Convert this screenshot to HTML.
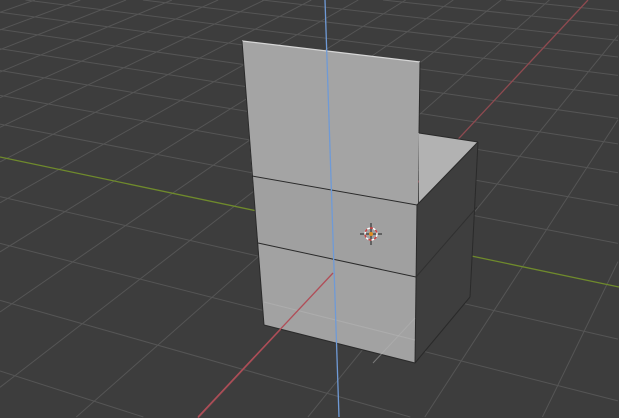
<!DOCTYPE html>
<html><head><meta charset="utf-8"><style>
html,body{margin:0;padding:0;background:#3d3d3d;width:619px;height:418px;overflow:hidden}
svg{display:block;overflow:hidden}
</style></head><body>
<svg id="s" width="619" height="418" viewBox="0 0 619 418" xmlns="http://www.w3.org/2000/svg">
<rect width="619" height="418" fill="#3d3d3d"/>
<g id="grid" stroke="#555555" stroke-width="1" fill="none"></g>
<line x1="0" y1="157" x2="619" y2="287" stroke="#6f8a2c" stroke-width="1.3"/>
<line x1="198" y1="418" x2="588" y2="0" stroke="#8e4a50" stroke-width="1.3"/>
<polygon points="242,41 420,62 418,205 252,176" fill="#a4a4a4"/>
<line x1="242" y1="41" x2="420" y2="62" stroke="#d6d6d6" stroke-width="1.2"/>
<polygon points="419,133 478,142 417,205 419,205" fill="#b2b2b2"/>
<polygon points="417,205 478,142 470,297 415,363" fill="#3e3e3e"/>
<polygon points="252,176 417,205 416,277 258,243" fill="#a0a0a0"/>
<polygon points="258,243 416,277 415,363 264,325" fill="#a2a2a2"/>
<g stroke="#2a2a2a" stroke-width="1" fill="none">
<line x1="242" y1="41" x2="264" y2="325"/>
<line x1="420" y1="62" x2="419" y2="133"/>
<line x1="252" y1="176" x2="417" y2="205"/>
<line x1="258" y1="243" x2="416" y2="277"/>
<line x1="264" y1="325" x2="415" y2="363"/>
<line x1="417" y1="205" x2="415" y2="363"/>
<line x1="419" y1="133" x2="478" y2="142"/>
<line x1="478" y1="142" x2="417" y2="205"/>
<line x1="478" y1="142" x2="470" y2="297"/>
<line x1="470" y1="297" x2="415" y2="363"/>
<line x1="416" y1="277" x2="477" y2="207" stroke="#303030"/>
</g>
<line x1="264" y1="302" x2="415" y2="340" stroke="#b4b4b4" stroke-width="1" opacity="0.6"/>
<line x1="373" y1="363" x2="415" y2="318" stroke="#b4b4b4" stroke-width="1" opacity="0.5"/>
<line x1="198" y1="417" x2="333" y2="273" stroke="#b04e58" stroke-width="1.3"/>
<line x1="325" y1="0" x2="339" y2="417" stroke="#6f9ad6" stroke-width="1.3"/>
<g transform="translate(371,234)">
<line x1="-11" y1="0" x2="11" y2="0" stroke="#222" stroke-width="1"/>
<line x1="0" y1="-11" x2="0" y2="11" stroke="#222" stroke-width="1"/>
<circle r="6" fill="none" stroke="#fff" stroke-width="1.4" stroke-dasharray="3 3"/>
<circle r="6" fill="none" stroke="#d04040" stroke-width="1.4" stroke-dasharray="3 3" stroke-dashoffset="3"/>
<circle r="2" fill="#e08a20"/>
</g>
</svg>
<script>
(function(){
var V1=[892,-302],V2=[-1932,-249],O=[369,235],s1=0.0663,s2=0.0312;
function P(u,v){var w=1+s1*u+s2*v;return [(s1*u*V1[0]+s2*v*V2[0]+O[0])/w,(s1*u*V1[1]+s2*v*V2[1]+O[1])/w];}
var g=document.getElementById('grid'),eps=0.06,h='';
function clip(a,b){var x0=a[0],y0=a[1],dx=b[0]-x0,dy=b[1]-y0,t0=0,t1=1;
  var p=[-dx,dx,-dy,dy],q=[x0-0,618-x0,y0-0,417-y0];
  for(var i=0;i<4;i++){if(p[i]===0){if(q[i]<0)return null;}else{var r=q[i]/p[i];if(p[i]<0){if(r>t1)return null;if(r>t0)t0=r;}else{if(r<t0)return null;if(r<t1)t1=r;}}}
  return [[x0+t0*dx,y0+t0*dy],[x0+t1*dx,y0+t1*dy]];}
function add(a,b){var c=clip(a,b);if(!c)return;h+='<line x1="'+c[0][0].toFixed(1)+'" y1="'+c[0][1].toFixed(1)+'" x2="'+c[1][0].toFixed(1)+'" y2="'+c[1][1].toFixed(1)+'"/>';}
for(var u=-14;u<=60;u++){ if(u===0)continue;
  var vmin=(eps-1-s1*u)/s2; var vmax=80; if(vmin<-80)vmin=-80;
  if(vmin>=vmax)continue; add(P(u,vmin),P(u,vmax));}
for(var v=-30;v<=80;v++){ if(v===0)continue;
  var umin=(eps-1-s2*v)/s1; var umax=80; if(umin<-80)umin=-80;
  if(umin>=umax)continue; add(P(umin,v),P(umax,v));}
g.innerHTML=h;
})();
</script>
</body></html>
